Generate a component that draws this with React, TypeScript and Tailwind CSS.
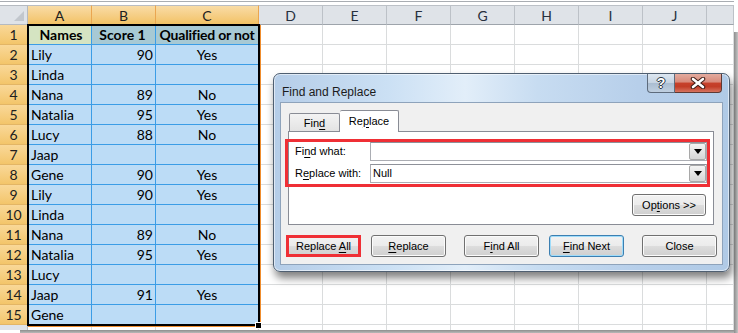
import React from "react";

const colW = [
  "w-[64px]",
  "w-[64px]",
  "w-[103px]",
  "w-[64px]",
  "w-[64px]",
  "w-[64px]",
  "w-[64px]",
  "w-[64px]",
  "w-[64px]",
  "w-[64px]",
  "w-[27px]",
];
const letters = ["A", "B", "C", "D", "E", "F", "G", "H", "I", "J", ""];

const data: [string, string, string][] = [
  ["Names", "Score 1", "Qualified or not"],
  ["Lily", "90", "Yes"],
  ["Linda", "", ""],
  ["Nana", "89", "No"],
  ["Natalia", "95", "Yes"],
  ["Lucy", "88", "No"],
  ["Jaap", "", ""],
  ["Gene", "90", "Yes"],
  ["Lily", "90", "Yes"],
  ["Linda", "", ""],
  ["Nana", "89", "No"],
  ["Natalia", "95", "Yes"],
  ["Lucy", "", ""],
  ["Jaap", "91", "Yes"],
  ["Gene", "", ""],
];

function U({ children }: { children: React.ReactNode }) {
  return <span className="underline underline-offset-[2px]">{children}</span>;
}

function Sheet() {
  return (
    <div className="relative h-[330px] w-[734px] font-['Lato',sans-serif] text-[14px] text-black">
      <div className="h-[1px]" />
      <div className="h-[1px] bg-[#a9adb2]" />
      <div className="h-[3px]" />
      {/* column headers */}
      <div className="flex h-[20px]">
        <div className="relative w-[28px] border-y border-r border-[#b5bac0] bg-[#dfe3e8]">
          <div className="absolute bottom-[3px] right-[3px] h-0 w-0 border-b-[10px] border-l-[10px] border-b-[#c2c7cd] border-l-transparent" />
        </div>
        {letters.map((l, i) =>
          i < 3 ? (
            <div
              key={i}
              className={`${colW[i]} flex items-center justify-center border-y border-r border-t-[#b9bdc3] border-r-[#eaa650] border-b-[#f29436] bg-gradient-to-b from-[#f9dca6] to-[#f2c264] text-[#202020]`}
            >
              {l}
            </div>
          ) : (
            <div
              key={i}
              className={`${colW[i]} flex items-center justify-center border-y border-r border-[#bcc1c7] border-b-[#9ea4ab] bg-[#dfe3e8] text-[#27303d]`}
            >
              {l}
            </div>
          )
        )}
      </div>
      {/* rows */}
      {data.map((row, r) => {
        const head = r === 0;
        return (
          <div key={r} className="flex h-[20px]">
            <div className="w-[28px] border-b border-r border-b-[#e3b565] border-r-[#e29a3c] bg-gradient-to-b from-[#f9d898] to-[#f3c56a] text-center leading-[19px] text-[#202020]">
              {r + 1}
            </div>
            <div
              className={`w-[64px] border-b border-r border-[#3b9de6] pl-[3px] leading-[20px] ${
                head ? "bg-[#d5e4c2] text-center font-bold" : "bg-[#bcdcf6]"
              }`}
            >
              {row[0]}
            </div>
            <div
              className={`w-[64px] border-b border-r border-[#3b9de6] pr-[2px] leading-[20px] ${
                head ? "bg-[#a7c9d4] text-center font-bold" : "bg-[#bcdcf6] text-right"
              }`}
            >
              {row[1]}
            </div>
            <div
              className={`w-[103px] whitespace-nowrap border-b border-r border-[#3b9de6] leading-[20px] ${
                head ? "bg-[#a7c9d4] text-center font-bold tracking-[-0.2px]" : "bg-[#bcdcf6] text-center"
              }`}
            >
              {row[2]}
            </div>
            {colW.slice(3).map((w, i) => (
              <div key={i} className={`${w} border-b border-r border-[#dadcdd]`} />
            ))}
          </div>
        );
      })}
      {/* partial row 16 */}
      <div className="flex h-[5px] overflow-hidden">
        <div className="w-[28px] border-r border-[#b5bac0] bg-[#dfe3e8]" />
        {colW.map((w, i) => (
          <div key={i} className={`${w} border-r border-[#dadcdd]`} />
        ))}
      </div>
      {/* selection outline */}
      <div className="pointer-events-none absolute left-[27px] top-[24px] h-[302px] w-[233px] border-2 border-black shadow-[1px_1px_0_#ef8d2e]" />
      <div className="absolute left-[255px] top-[322px] h-[7px] w-[7px] border border-white bg-black" />
    </div>
  );
}

function Btn({
  children,
  def = false,
  w = "w-[75px]",
}: {
  children: React.ReactNode;
  def?: boolean;
  w?: string;
}) {
  return (
    <div
      className={`relative flex h-[22px] ${w} items-center justify-center rounded-[3px] border bg-[linear-gradient(#f2f2f2_0%,#ebebeb_50%,#dddddd_50%,#cfcfcf_100%)] text-black ${
        def
          ? "border-[#3c7fb1] shadow-[inset_0_0_0_1px_#9fdcfa]"
          : "border-[#707070] shadow-[inset_0_0_0_1px_#fbfbfb]"
      }`}
    >
      <span className="whitespace-pre">{children}</span>
    </div>
  );
}

function Combo({ value }: { value: string }) {
  return (
    <div className="flex h-[19px] w-[337px] items-center border border-[#abadb3] border-t-[#8e9199] bg-white pl-[2px]">
      <span className="flex-1">{value}</span>
      <div className="flex h-[17px] w-[17px] items-center justify-center rounded-[2px] border border-[#a8a8a8] bg-gradient-to-b from-[#f4f4f4] to-[#d6d6d6]">
        <svg width="8" height="5" viewBox="0 0 8 5">
          <path d="M0 0h8L4 5z" fill="#000" />
        </svg>
      </div>
    </div>
  );
}

function Dialog() {
  return (
    <div className="absolute left-[273px] top-[73px] flex h-[199px] w-[457px] flex-col rounded-[7px] border border-[#4f5f71] bg-[linear-gradient(90deg,#b5cde8_0%,#cbe0f4_25%,#e2eef9_42%,#c7dcf1_58%,#b7cfea_80%,#b0cae6_100%)] font-['Liberation_Sans',Arial,sans-serif] text-[11px] text-black shadow-[2px_6px_9px_rgba(0,0,0,0.5),inset_0_0_0_1px_rgba(255,255,255,0.55)]">
      {/* title bar */}
      <div className="flex h-[28px] items-start justify-between">
        <span className="pl-[8px] pt-[9px] text-[12px] text-[#1b1b1b]">Find and Replace</span>
        <div className="mr-[7px] flex">
          <div className="flex h-[19px] w-[28px] items-center justify-center rounded-bl-[4px] border border-t-0 border-[#5d6b7c] bg-[linear-gradient(#dde7f1_0%,#c5d3e2_50%,#aabdd1_51%,#bfcfe0_100%)] text-[14px] font-bold text-white [text-shadow:1px_0_0_#2b3540,-1px_0_0_#2b3540,0_1px_0_#2b3540,0_-1px_0_#2b3540]">
            ?
          </div>
          <div className="flex h-[19px] w-[47px] items-center justify-center rounded-br-[4px] border border-l-0 border-t-0 border-[#5d3a34] bg-[linear-gradient(#e3ab9f_0%,#d88a7a_45%,#c7412b_50%,#c23d27_70%,#d6735f_100%)]">
            <svg width="16" height="12" viewBox="0 0 16 12">
              <path d="M3 2l10 8M13 2L3 10" stroke="#3b1a14" strokeWidth="4.5" strokeLinecap="round" />
              <path d="M3 2l10 8M13 2L3 10" stroke="#ffffff" strokeWidth="2.6" strokeLinecap="round" />
            </svg>
          </div>
        </div>
      </div>
      {/* client area */}
      <div className="mx-[6px] mb-[6px] flex flex-1 flex-col border border-[#8ea3bb] bg-[#f0f0f0] px-[7px] pt-[7px]">
        {/* tabs */}
        <div className="flex h-[21px] items-end pl-[1px]">
          <div className="flex h-[18px] w-[51px] items-center justify-center rounded-t-[2px] border border-b-0 border-[#898c95] bg-gradient-to-b from-[#f3f3f3] to-[#e3e3e3] pt-[1px]">
            <span>
              Fin<U>d</U>
            </span>
          </div>
          <div className="relative z-10 -mb-[1px] flex h-[22px] w-[59px] items-center justify-center rounded-t-[2px] border border-b-0 border-l-0 border-[#898c95] bg-white pb-[1px]">
            <span>
              Re<U>p</U>lace
            </span>
          </div>
        </div>
        {/* panel */}
        <div className="relative mr-[1px] flex h-[94px] flex-col border border-[#898c95] bg-white px-[6px] pt-[10px]">
          <div className="flex items-center">
            <span className="w-[75px]">
              Fi<U>n</U>d what:
            </span>
            <Combo value="" />
          </div>
          <div className="mt-[3px] flex items-center">
            <span className="w-[75px]">
              R<U>e</U>place with:
            </span>
            <Combo value="Null" />
          </div>
          <div className="mt-[11px] flex justify-end pr-[1px]">
            <Btn w="w-[74px]">
              Op<U>t</U>ions &gt;&gt;
            </Btn>
          </div>
          <div className="pointer-events-none absolute left-[-4px] top-[7px] h-[48px] w-[425px] border-[3px] border-[#ef2f35]" />
        </div>
        {/* buttons */}
        <div className="-ml-[2px] mt-[10px] flex">
          <div className="relative">
            <Btn>
              Replace <U>A</U>ll
            </Btn>
            <div className="pointer-events-none absolute inset-0 border-[3px] border-[#ef2f35]" />
          </div>
          <div className="ml-[10px]">
            <Btn>
              <U>R</U>eplace
            </Btn>
          </div>
          <div className="ml-[18px]">
            <Btn>
              F<U>i</U>nd All
            </Btn>
          </div>
          <div className="ml-[10px]">
            <Btn def>
              <U>F</U>ind Next
            </Btn>
          </div>
          <div className="ml-[18px]">
            <Btn>Close</Btn>
          </div>
        </div>
      </div>
    </div>
  );
}

export default function App() {
  return (
    <div className="relative flex h-[333px] w-[738px] overflow-hidden bg-white">
      <div className="flex w-[734px] flex-col">
        <Sheet />
        <div className="ml-[20px] h-[3px] bg-gradient-to-b from-[#8e8e8e] to-[#b9b9b9]" />
      </div>
      <div className="mt-[32px] w-[4px] bg-gradient-to-r from-[#8e8e8e] to-[#c4c4c4]" />
      <Dialog />
    </div>
  );
}
